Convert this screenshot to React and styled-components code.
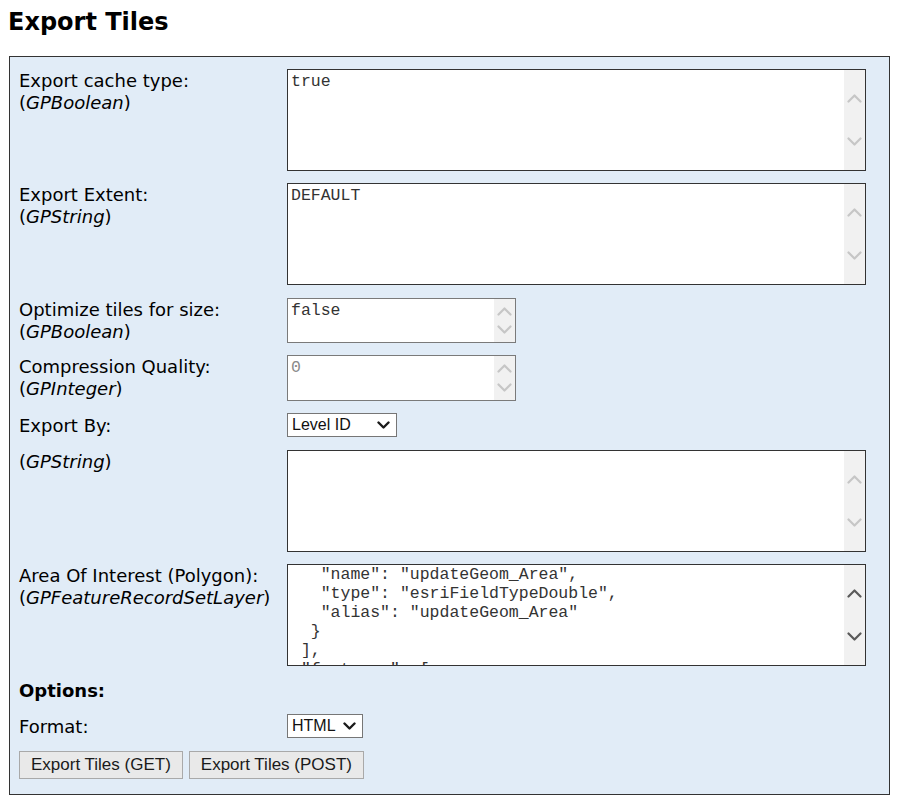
import React from 'react';
import styled, { createGlobalStyle } from 'styled-components';

const Global = createGlobalStyle`
  body {
    margin: 8px;
    background: #ffffff;
    font-family: "DejaVu Sans", Verdana, sans-serif;
    color: #000;
  }
`;

const Title = styled.h1`
  margin: 0 0 20px;
  font-size: 24px;
  line-height: 28px;
  font-weight: bold;
  color: #000;
`;

const Panel = styled.form`
  margin: 0 0 0 1px;
  width: 881px;
  box-sizing: border-box;
  border: 1px solid #333;
  background: #e1ecf7;
  padding: 12px 0 15px 9px;
  display: flex;
  flex-direction: column;
  gap: 12px;
`;

const Row = styled.div`
  display: grid;
  grid-template-columns: 268px auto;
  align-items: start;
  margin-top: ${(p) => p.$shift || 0}px;
`;

const Label = styled.div`
  font-size: 18px;
  line-height: 21.5px;
  padding-top: ${(p) => (p.$pt !== undefined ? p.$pt : 1)}px;
  color: #000;
  font-weight: ${(p) => (p.$bold ? 'bold' : 'normal')};
`;

const Type = styled.i`
  font-style: italic;
`;

const Field = styled.div`
  display: flex;
  box-sizing: border-box;
  width: ${(p) => p.$w}px;
  height: ${(p) => p.$h}px;
  border: 1px solid ${(p) => (p.$dark ? '#333' : '#7a7a7a')};
  background: #fff;
  overflow: hidden;
`;

const FieldText = styled.pre`
  flex: 1;
  margin: 0;
  padding: ${(p) => p.$pad || '2px 3px 0'};
  overflow: hidden;
  font-family: "Liberation Mono", "Courier New", monospace;
  font-size: 16.5px;
  line-height: 19px;
  color: ${(p) => (p.$muted ? '#8a8a8a' : '#333')};
  white-space: pre;
`;

const Scrollbar = styled.div`
  width: 21px;
  flex: none;
  background: #f1f1f1;
  display: flex;
  flex-direction: column;
  align-items: center;
  justify-content: space-between;
  padding: ${(p) => p.$pad}px 0;
  box-sizing: border-box;
`;

const Select = styled.div`
  display: flex;
  align-items: center;
  justify-content: space-between;
  box-sizing: border-box;
  width: ${(p) => p.$w}px;
  height: 24px;
  border: 1px solid #767676;
  background: #fff;
  padding: 0 6px 0 4px;
  font-family: "Liberation Sans", Arial, sans-serif;
  font-size: 16px;
  color: #111;
`;

const Buttons = styled.div`
  display: flex;
  gap: 6px;
  margin-top: 1px;
`;

const Button = styled.button`
  height: 28px;
  padding: 0 11px;
  border: 1px solid #a9a9a9;
  border-radius: 0;
  background: #e9e9e9;
  font-family: "Liberation Sans", Arial, sans-serif;
  font-size: 17px;
  color: #1a1a1a;
`;

const Chevron = ({ dir, active }) => (
  <svg width="15" height="10" viewBox="0 0 15 10">
    <polyline
      points={dir === 'up' ? '1.5,8.5 7.5,2.5 13.5,8.5' : '1.5,1.5 7.5,7.5 13.5,1.5'}
      fill="none"
      stroke={active ? '#5a5a5a' : '#c6c6c6'}
      strokeWidth="2.2"
      strokeLinecap="round"
      strokeLinejoin="round"
    />
  </svg>
);

const SelectArrow = () => (
  <svg width="13" height="8" viewBox="0 0 13 8">
    <polyline
      points="1.5,1.5 6.5,6.5 11.5,1.5"
      fill="none"
      stroke="#1a1a1a"
      strokeWidth="2.4"
      strokeLinecap="round"
      strokeLinejoin="round"
    />
  </svg>
);

const TextBox = ({ w, h, dark, text, muted, active, pad }) => (
  <Field $w={w} $h={h} $dark={dark}>
    <FieldText $muted={muted} $pad={pad}>{text}</FieldText>
    <Scrollbar $pad={h > 60 ? 23 : 7}>
      <Chevron dir="up" active={active} />
      <Chevron dir="down" active={active} />
    </Scrollbar>
  </Field>
);

const aoiText = `   "name": "updateGeom_Area",
   "type": "esriFieldTypeDouble",
   "alias": "updateGeom_Area"
  }
 ],
 "features": [`;

export default function App() {
  return (
    <>
      <Global />
      <Title>Export Tiles</Title>
      <Panel onSubmit={(e) => e.preventDefault()}>
        <Row>
          <Label>
            Export cache type:<br />(<Type>GPBoolean</Type>)
          </Label>
          <TextBox w={579} h={102} dark text="true" />
        </Row>
        <Row>
          <Label>
            Export Extent:<br />(<Type>GPString</Type>)
          </Label>
          <TextBox w={579} h={102} dark text="DEFAULT" />
        </Row>
        <Row $shift={1}>
          <Label>
            Optimize tiles for size:<br />(<Type>GPBoolean</Type>)
          </Label>
          <TextBox w={229} h={45} text="false" />
        </Row>
        <Row>
          <Label>
            Compression Quality:<br />(<Type>GPInteger</Type>)
          </Label>
          <TextBox w={229} h={46} text="0" muted />
        </Row>
        <Row>
          <Label $pt={2}>Export By:</Label>
          <Select $w={110}>
            <span>Level ID</span>
            <SelectArrow />
          </Select>
        </Row>
        <Row $shift={1}>
          <Label>
            (<Type>GPString</Type>)
          </Label>
          <TextBox w={579} h={102} dark text="" />
        </Row>
        <Row>
          <Label>
            Area Of Interest (Polygon):<br />(<Type>GPFeatureRecordSetLayer</Type>)
          </Label>
          <TextBox w={579} h={102} dark text={aoiText} active pad="0 3px" />
        </Row>
        <Row $shift={2}>
          <Label $bold $pt={0}>Options:</Label>
        </Row>
        <Row>
          <Label $pt={2}>Format:</Label>
          <Select $w={76}>
            <span>HTML</span>
            <SelectArrow />
          </Select>
        </Row>
        <Buttons>
          <Button type="button">Export Tiles (GET)</Button>
          <Button type="button">Export Tiles (POST)</Button>
        </Buttons>
      </Panel>
    </>
  );
}
